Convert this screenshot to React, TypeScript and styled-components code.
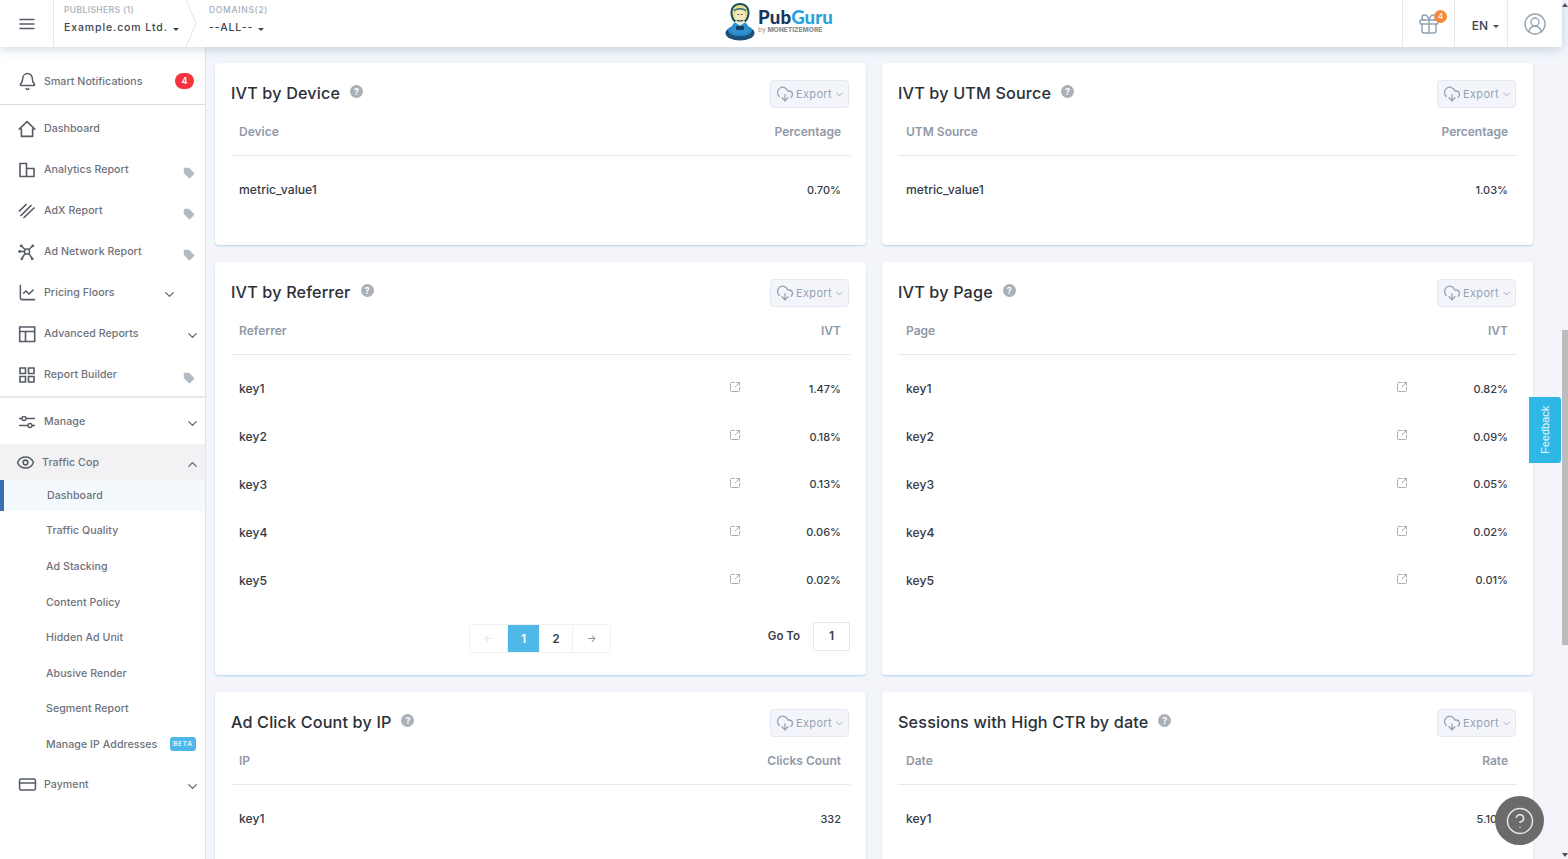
import React from "react";
import styled, { createGlobalStyle } from "styled-components";
import { Bell, ChevronDown, ChevronUp, Tag, Eye, CreditCard, LineChart, Gift, CircleUserRound, CloudDownload, SquareArrowOutUpRight, CircleHelp } from "lucide-react";

const FONT = `Inter, "Noto Sans", "Liberation Sans", sans-serif`;

const Global = createGlobalStyle`
  html, body { margin: 0; padding: 0; height: 100%; overflow: hidden; }
  body { font-family: ${FONT}; background: #f3f5fb; color: #2b3240; }
  #root { height: 100%; }
  * { box-sizing: border-box; }
`;

const Root = styled.div`
  position: relative;
  display: flex;
  width: 1568px;
  height: 859px;
  overflow: hidden;
  background: #f3f5fb;
`;
const Page = styled.div`
  flex: 1;
  min-width: 0;
  display: flex;
  flex-direction: column;
`;
const Track = styled.div`
  width: 6px;
  display: flex;
  flex-direction: column;
  align-items: stretch;
  padding-top: 330px;
  position: relative;
  background: #f3f5fb;
`;
const Thumb = styled.div`
  height: 315px;
  background: #bcbcbc;
`;
const TrackArrow = styled.span<{ $bottom?: boolean }>`
  position: absolute;
  left: 0;
  ${(p) => (p.$bottom ? "bottom: 2px;" : "top: 3px;")}
  border-left: 3px solid transparent;
  border-right: 3px solid transparent;
  ${(p) => (p.$bottom ? "border-top: 4px solid #505050;" : "border-bottom: 4px solid #505050;")}
`;

const Header = styled.header`
  height: 47px;
  flex: none;
  background: #fff;
  display: grid;
  grid-template-columns: 1fr auto 1fr;
  align-items: stretch;
  box-shadow: 0 2px 10px rgba(120, 150, 170, 0.38);
  position: relative;
  z-index: 3;
`;
const HeaderLeft = styled.div`
  display: flex;
  align-items: stretch;
`;
const Burger = styled.div`
  width: 54px;
  display: flex;
  align-items: center;
  justify-content: center;
  color: #555b66;
  border-right: 1px solid #e7e9ee;
`;
const Crumb = styled.div<{ $w: number; $pad: number }>`
  width: ${(p) => p.$w}px;
  padding: 4px 0 0 ${(p) => p.$pad}px;
  position: relative;
  display: flex;
  flex-direction: column;
`;
const Chevron = styled.svg`
  position: absolute;
  right: -11px;
  top: 0;
`;
const CrumbLabel = styled.div<{ $ls: number }>`
  font-size: 8.5px;
  letter-spacing: ${(p) => p.$ls}px;
  line-height: 12px;
  color: #a4adba;
  font-weight: 500;
  white-space: nowrap;
`;
const CrumbValue = styled.div`
  font-size: 10.5px;
  line-height: 14px;
  margin-top: 5px;
  letter-spacing: 0.9px;
  font-weight: 500;
  color: #3d4450;
  display: flex;
  align-items: center;
  gap: 5px;
  white-space: nowrap;
`;
const Caret = styled.span`
  display: inline-block;
  border-left: 3.5px solid transparent;
  border-right: 3.5px solid transparent;
  border-top: 3.5px solid #3d4450;
  margin-top: 2px;
`;
const LogoWrap = styled.div`
  display: flex;
  align-items: flex-start;
  padding-top: 2px;
  padding-right: 4px;
  gap: 3px;
`;
const LogoText = styled.div`
  display: flex;
  flex-direction: column;
  padding-top: 7px;
`;
const LogoName = styled.div`
  font-family: "Lato", ${FONT};
  font-size: 18.6px;
  line-height: 17px;
  font-weight: 900;
  color: #17375e;
  letter-spacing: 0.1px;
  span {
    color: #27a2de;
  }
`;
const LogoBy = styled.div`
  font-size: 6.5px;
  line-height: 9px;
  color: #8a8f96;
  white-space: nowrap;
  b {
    font-weight: 800;
    font-size: 6.6px;
  }
`;
const HeaderRight = styled.div`
  display: flex;
  justify-content: flex-end;
  align-items: stretch;
`;
const HeaderCell = styled.div<{ $w: number; $shift?: number }>`
  width: ${(p) => p.$w}px;
  border-left: 1px solid #e7e9ee;
  display: flex;
  align-items: center;
  justify-content: center;
  padding-left: ${(p) => p.$shift ?? 0}px;
  position: relative;
  color: #93a3b3;
`;
const GiftBadge = styled.span`
  position: absolute;
  top: 10px;
  left: 31px;
  width: 13px;
  height: 13px;
  border-radius: 50%;
  background: #f58a3c;
  color: #fff;
  font-size: 8px;
  line-height: 13px;
  text-align: center;
`;
const Lang = styled.span`
  font-size: 12px;
  font-weight: 500;
  color: #3d4450;
  display: flex;
  align-items: center;
  gap: 5px;
  padding-top: 3px;
`;

const Body = styled.div`
  flex: 1;
  min-height: 0;
  display: flex;
`;
const Side = styled.aside`
  width: 206px;
  flex: none;
  background: #fff;
  border-right: 1px solid #dfe2e8;
  display: flex;
  flex-direction: column;
  padding-top: 11px;
`;
const Notif = styled.div`
  height: 47px;
  flex: none;
  padding: 1px 11px 1px 18px;
  display: flex;
  align-items: center;
  border-bottom: 1px solid #d9dbe0;
  margin-bottom: 3px;
  color: #6a6e78;
`;
const NavRow = styled.div`
  height: 41px;
  flex: none;
  display: flex;
  align-items: center;
  padding: 0 6px 0 18px;
  color: #5e636d;
  position: relative;
`;
const NavIcon = styled.span`
  width: 26px;
  display: flex;
  align-items: center;
  color: #565b65;
  flex: none;
`;
const NavText = styled.span`
  font-size: 10.6px;
  font-weight: 500;
  color: #6d727c;
  white-space: nowrap;
  flex: 1;
  letter-spacing: 0.06px;
`;
const NotifBadge = styled.span`
  width: 19px;
  height: 16px;
  border-radius: 8px;
  background: #f5333f;
  color: #fff;
  font-size: 9px;
  font-weight: 600;
  line-height: 16px;
  text-align: center;
`;
const Rule = styled.div`
  height: 2px;
  background: #e7e8ec;
  margin: 1px 0 3px;
  flex: none;
`;
const CopRow = styled.div`
  height: 36px;
  margin-top: 2px;
  background: #f2f2f4;
  display: flex;
  align-items: center;
  padding: 0 6px 0 16px;
  flex: none;
`;
const SubList = styled.div`
  display: flex;
  flex-direction: column;
  flex: none;
  margin-bottom: 2px;
`;
const SubItem = styled.div<{ $active?: boolean; $h?: number }>`
  height: ${(p) => p.$h ?? 35.5}px;
  display: flex;
  align-items: center;
  padding-left: ${(p) => (p.$active ? 43 : 46)}px;
  padding-right: 9px;
  font-size: 10.6px;
  font-weight: 500;
  letter-spacing: 0.06px;
  color: #6d727c;
  white-space: nowrap;
  background: ${(p) => (p.$active ? "#f4f9fd" : "transparent")};
  border-left: ${(p) => (p.$active ? "4px solid #3a6fb0" : "none")};
`;
const Beta = styled.span`
  background: #4fb8e8;
  color: #dff3fc;
  font-size: 6.5px;
  font-weight: 700;
  letter-spacing: 0.8px;
  border-radius: 3px;
  padding: 0 3px;
  height: 14px;
  line-height: 14px;
  margin-left: auto;
`;

const Main = styled.main`
  flex: 1;
  min-width: 0;
  overflow: hidden;
  padding: 16px 29px 0 9px;
  display: grid;
  grid-template-columns: 651px 651px;
  column-gap: 16px;
  row-gap: 17px;
  align-content: start;
`;
const Card = styled.section<{ $h?: number }>`
  background: #fff;
  border-radius: 4px;
  box-shadow: 0 1px 2px rgba(120, 190, 220, 0.55);
  padding: 17px 16px 0;
  ${(p) => (p.$h ? `height: ${p.$h}px;` : "")}
`;
const CardHead = styled.div`
  display: flex;
  align-items: flex-start;
  justify-content: space-between;
  height: 28px;
`;
const CardTitle = styled.h3`
  margin: 0;
  font-size: 16.2px;
  font-weight: 500;
  line-height: 26px;
  letter-spacing: 0.15px;
  color: #2b3038;
  display: flex;
  gap: 10px;
`;
const Hint = styled.span`
  width: 13px;
  height: 13px;
  margin-top: 5px;
  border-radius: 50%;
  background: #aab0b8;
  color: #fff;
  font-size: 9px;
  font-weight: 700;
  line-height: 13px;
  text-align: center;
`;
const ExportBtn = styled.div`
  width: 79px;
  height: 28px;
  border-radius: 4px;
  background: #f3f5fb;
  border: 1px solid #e4e8f0;
  display: flex;
  align-items: center;
  padding-left: 5px;
  gap: 2px;
  color: #97a3b4;
  font-size: 11px;
  letter-spacing: 0.35px;
  margin-right: 1px;
`;
const HeadRow = styled.div`
  display: flex;
  justify-content: space-between;
  height: 48px;
  padding: 14px 9px 0 8px;
  border-bottom: 1px solid #e6e8ec;
  font-size: 12px;
  font-weight: 600;
  line-height: 20px;
  color: #8f99a8;
`;
const DataRows = styled.div`
  padding-top: 10px;
`;
const DataRow = styled.div`
  display: flex;
  align-items: center;
  height: 47.8px;
  padding: 0 9px 0 8px;
  font-weight: 500;
  color: #363c47;
`;
const RowKey = styled.span`
  flex: 1;
  font-size: 12.2px;
`;
const RowIcon = styled.span`
  color: #a9afb8;
  display: flex;
  margin-top: -3px;
`;
const RowValue = styled.span`
  width: 100px;
  font-size: 11px;
  text-align: right;
`;
const Footer = styled.div`
  display: flex;
  align-items: flex-start;
  margin-top: 18px;
  padding-left: 238px;
`;
const Pager = styled.div`
  display: flex;
  height: 29px;
  margin-top: 2px;
  border: 1px solid #eef0f3;
  border-radius: 3px;
`;
const PageCell = styled.div<{ $w: number; $active?: boolean; $faint?: boolean; $arrow?: boolean }>`
  width: ${(p) => p.$w}px;
  display: flex;
  align-items: center;
  justify-content: center;
  font-size: ${(p) => (p.$arrow ? 10 : 12)}px;
  font-weight: ${(p) => (p.$arrow ? 400 : 600)};
  background: ${(p) => (p.$active ? "#4fb8e8" : "transparent")};
  color: ${(p) => (p.$active ? "#fff" : p.$faint ? "#dfe1e5" : p.$arrow ? "#7d828b" : "#3a3f49")};
  & + & {
    border-left: ${(p) => (p.$active ? "none" : "1px solid #f0f1f4")};
  }
`;
const GoTo = styled.div`
  margin-left: auto;
  display: flex;
  align-items: center;
  gap: 13px;
  font-size: 11.5px;
  font-weight: 600;
  color: #3a3f49;
`;
const GoInput = styled.div`
  width: 37px;
  height: 29px;
  border: 1px solid #e6eaee;
  border-radius: 2px;
  display: flex;
  align-items: center;
  justify-content: center;
  font-size: 12px;
  font-weight: 600;
  padding-bottom: 2px;
`;

const Feedback = styled.div`
  position: absolute;
  right: 7px;
  top: 397px;
  width: 32px;
  height: 66px;
  background: #2fb8e6;
  border-radius: 3px 0 0 3px;
  color: #e8f8fd;
  font-family: "Liberation Sans", sans-serif;
  font-size: 11px;
  writing-mode: vertical-rl;
  transform: rotate(180deg);
  display: flex;
  align-items: center;
  justify-content: center;
  z-index: 4;
`;
const HelpFab = styled.div`
  position: absolute;
  left: 1495px;
  top: 796px;
  width: 49px;
  height: 49px;
  border-radius: 50%;
  background: #6b6b6b;
  color: #e6e6e6;
  display: flex;
  align-items: center;
  justify-content: center;
  z-index: 4;
`;

const ico = { size: 19, strokeWidth: 1.9 };

const BurgerIcon = () => (
  <svg width="16" height="12" viewBox="0 0 16 12" fill="none" stroke="currentColor" strokeWidth="1.5">
    <path d="M.5 1.5h15M.5 6h15M.5 10.5h15" />
  </svg>
);
const BarsIcon = () => (
  <svg width="18" height="18" viewBox="0 0 18 18" fill="none" stroke="currentColor" strokeWidth="1.6">
    <path d="M2 2.500h6.500v13H2zM8.500 7.500H16v8H8.500z" />
  </svg>
);
const SlashIcon = () => (
  <svg width="18" height="18" viewBox="0 0 18 18" fill="none" stroke="currentColor" strokeWidth="1.7" strokeLinecap="round">
    <path d="M1.500 9 8 2.500M3 13.500 13 3.500M6 15.500 16 6" />
  </svg>
);
const NetIcon = () => (
  <svg width="18" height="18" viewBox="0 0 18 18" fill="none" stroke="currentColor" strokeWidth="1.5">
    <circle cx="9" cy="8.500" r="2.600" />
    <path d="M7 6.500 3.500 3M11 6.500 14.500 3M6.400 8.500H2M7 10.500l-3 5M11 10.500l3 5" />
    <g fill="currentColor" stroke="none">
      <circle cx="3.200" cy="2.800" r="1.400" />
      <circle cx="14.800" cy="2.800" r="1.400" />
      <circle cx="1.600" cy="8.500" r="1.400" />
      <circle cx="3.800" cy="15.800" r="1.400" />
      <circle cx="14.200" cy="15.800" r="1.400" />
    </g>
  </svg>
);
const TableIcon = () => (
  <svg width="18" height="18" viewBox="0 0 18 18" fill="none" stroke="currentColor" strokeWidth="1.6">
    <path d="M1.700 2h15v14.500h-15zM1.700 6.500h15M7.500 6.500v10" />
  </svg>
);
const GridIcon = () => (
  <svg width="18" height="18" viewBox="0 0 18 18" fill="none" stroke="currentColor" strokeWidth="1.6">
    <path d="M2 2h5.500v5.500H2zM10.500 2H16v5.500h-5.500zM2 10.500h5.500V16H2zM10.500 10.500H16V16h-5.500z" />
  </svg>
);
const SliderIcon = () => (
  <svg width="18" height="18" viewBox="0 0 18 18" fill="none" stroke="currentColor" strokeWidth="1.4">
    <path d="M1 5.500h3M8 5.500h9M1 12.500h9M14 12.500h3" />
    <circle cx="6" cy="5.500" r="2" />
    <circle cx="12" cy="12.500" r="2" />
  </svg>
);
const HomeIcon = () => (
  <svg width="18" height="18" viewBox="0 0 18 18" fill="none" stroke="currentColor" strokeWidth="1.6">
    <path d="M1.200 9 9 1.600 16.800 9H14.600v7.400H3.400V9z" strokeLinejoin="round" />
  </svg>
);
const Logo = () => (
  <svg width="30" height="39" viewBox="0 0 30 39">
    <ellipse cx="15" cy="31" rx="14.500" ry="7.500" fill="#1b4f78" />
    <ellipse cx="15" cy="28.500" rx="12" ry="5.500" fill="#2a88c8" />
    <path d="M6 29c0-6 3-10 9-10s9 4 9 10c-3 3-15 3-18 0z" fill="#2f8fd0" />
    <path d="M15 1c6 0 9.500 4 9.500 9.500 0 5-2 8-3.500 9.500H9c-1.500-1.500-3.500-4.500-3.500-9.500C5.500 5 9 1 15 1z" fill="#1d4f63" />
    <path d="M15 3c4.500 0 7.500 3 7.500 7.500 0 3-1 6-2.500 7.500H10c-1.500-1.500-2.500-4.500-2.500-7.500C7.500 6 10.500 3 15 3z" fill="#e8df8e" />
    <path d="M9 9c2-3 10-3 12 0" fill="none" stroke="#2c6f85" strokeWidth="1.400" />
    <ellipse cx="15" cy="13.500" rx="5" ry="5" fill="#f6ecc0" />
    <path d="M12.300 12.500h2M15.700 12.500h2" stroke="#5a4a20" strokeWidth="0.900" />
    <path d="M11 17.500c1 3 7 3 8 0l1 3-5 3-5-3z" fill="#f2edd2" />
    <rect x="11" y="24" width="8" height="4" rx="1" fill="#143e5f" />
  </svg>
);

type Nav = { label: string; icon: React.ReactNode; tag?: boolean; chevron?: "far" | "near" };

const reports: Nav[] = [
  { label: "Dashboard", icon: <HomeIcon /> },
  { label: "Analytics Report", icon: <BarsIcon />, tag: true },
  { label: "AdX Report", icon: <SlashIcon />, tag: true },
  { label: "Ad Network Report", icon: <NetIcon />, tag: true },
  { label: "Pricing Floors", icon: <LineChart {...ico} />, chevron: "near" },
  { label: "Advanced Reports", icon: <TableIcon />, chevron: "far" },
  { label: "Report Builder", icon: <GridIcon />, tag: true },
];

const NavTag = styled.span`
  color: #b2bac4;
  display: flex;
  margin: 6px 4px 0 0;
`;
const NavChevron = styled.span<{ $near?: boolean }>`
  display: flex;
  color: #5e636d;
  margin: 4px ${(p) => (p.$near ? 22 : -1)}px 0 0;
`;

const NavItem = ({ item }: { item: Nav }) => (
  <NavRow>
    <NavIcon>{item.icon}</NavIcon>
    <NavText>{item.label}</NavText>
    {item.tag && (
      <NavTag>
        <Tag size={12} fill="currentColor" strokeWidth={1} />
      </NavTag>
    )}
    {item.chevron && (
      <NavChevron $near={item.chevron === "near"}>
        <ChevronDown size={15} strokeWidth={2} />
      </NavChevron>
    )}
  </NavRow>
);

const subs = ["Traffic Quality", "Ad Stacking", "Content Policy", "Hidden Ad Unit", "Abusive Render", "Segment Report"];

type TableProps = {
  title: string;
  col: string;
  valCol: string;
  rows: [string, string][];
  link?: boolean;
  pager?: boolean;
  h?: number;
};

const DataCard = ({ title, col, valCol, rows, link, pager, h }: TableProps) => (
  <Card $h={h}>
    <CardHead>
      <CardTitle>
        {title}
        <Hint>?</Hint>
      </CardTitle>
      <ExportBtn>
        <CloudDownload size={18} strokeWidth={1.7} />
        Export
        <ChevronDown size={11} strokeWidth={2} />
      </ExportBtn>
    </CardHead>
    <HeadRow>
      <span>{col}</span>
      <span>{valCol}</span>
    </HeadRow>
    <DataRows>
      {rows.map(([k, v]) => (
        <DataRow key={k}>
          <RowKey>{k}</RowKey>
          {link && (
            <RowIcon>
              <SquareArrowOutUpRight size={12} strokeWidth={2} />
            </RowIcon>
          )}
          <RowValue>{v}</RowValue>
        </DataRow>
      ))}
    </DataRows>
    {pager && (
      <Footer>
        <Pager>
          <PageCell $w={37} $faint $arrow>←</PageCell>
          <PageCell $w={32} $active>1</PageCell>
          <PageCell $w={33}>2</PageCell>
          <PageCell $w={38} $arrow>→</PageCell>
        </Pager>
        <GoTo>
          Go To
          <GoInput>1</GoInput>
        </GoTo>
      </Footer>
    )}
  </Card>
);

const keys = (vals: string[]): [string, string][] => vals.map((v, i) => [`key${i + 1}`, v]);

export default function App() {
  return (
    <Root>
      <Global />
      <Page>
        <Header>
          <HeaderLeft>
            <Burger>
              <BurgerIcon />
            </Burger>
            <Crumb $w={132} $pad={10}>
              <CrumbLabel $ls={0.4}>PUBLISHERS (1)</CrumbLabel>
              <CrumbValue>
                Example.com Ltd. <Caret />
              </CrumbValue>
              <Chevron width="12" height="47" viewBox="0 0 12 47" fill="none" stroke="#e3e5ea">
                <path d="M1 0l10 23.500L1 47" />
              </Chevron>
            </Crumb>
            <Crumb $w={120} $pad={23}>
              <CrumbLabel $ls={0.7}>DOMAINS(2)</CrumbLabel>
              <CrumbValue>
                --ALL-- <Caret />
              </CrumbValue>
            </Crumb>
          </HeaderLeft>
          <LogoWrap>
            <Logo />
            <LogoText>
              <LogoName>
                Pub<span>Guru</span>
              </LogoName>
              <LogoBy>
                by <b>MONETIZEMORE</b>
              </LogoBy>
            </LogoText>
          </LogoWrap>
          <HeaderRight>
            <HeaderCell $w={52}>
              <Gift size={24} strokeWidth={1.5} />
              <GiftBadge>4</GiftBadge>
            </HeaderCell>
            <HeaderCell $w={53} $shift={9}>
              <Lang>
                EN <Caret />
              </Lang>
            </HeaderCell>
            <HeaderCell $w={55}>
              <CircleUserRound size={24} strokeWidth={1.4} />
            </HeaderCell>
          </HeaderRight>
        </Header>
        <Body>
          <Side>
            <Notif>
              <NavIcon>
                <Bell {...ico} />
              </NavIcon>
              <NavText>Smart Notifications</NavText>
              <NotifBadge>4</NotifBadge>
            </Notif>
            {reports.map((r) => (
              <NavItem key={r.label} item={r} />
            ))}
            <Rule />
            <NavItem item={{ label: "Manage", icon: <SliderIcon />, chevron: "far" }} />
            <CopRow>
              <NavIcon>
                <Eye {...ico} />
              </NavIcon>
              <NavText>Traffic Cop</NavText>
              <NavChevron>
                <ChevronUp size={15} strokeWidth={2} />
              </NavChevron>
            </CopRow>
            <SubList>
              <SubItem $active $h={31}>Dashboard</SubItem>
              <SubItem $h={38}>Traffic Quality</SubItem>
              {subs.slice(1).map((s) => (
                <SubItem key={s}>{s}</SubItem>
              ))}
              <SubItem>
                Manage IP Addresses
                <Beta>BETA</Beta>
              </SubItem>
            </SubList>
            <NavItem item={{ label: "Payment", icon: <CreditCard {...ico} />, chevron: "far" }} />
          </Side>
          <Main>
            <DataCard h={182} title="IVT by Device" col="Device" valCol="Percentage" rows={[["metric_value1", "0.70%"]]} />
            <DataCard h={182} title="IVT by UTM Source" col="UTM Source" valCol="Percentage" rows={[["metric_value1", "1.03%"]]} />
            <DataCard h={413} title="IVT by Referrer" col="Referrer" valCol="IVT" link pager rows={keys(["1.47%", "0.18%", "0.13%", "0.06%", "0.02%"])} />
            <DataCard h={413} title="IVT by Page" col="Page" valCol="IVT" link rows={keys(["0.82%", "0.09%", "0.05%", "0.02%", "0.01%"])} />
            <DataCard title="Ad Click Count by IP" col="IP" valCol="Clicks Count" rows={[["key1", "332"], ["key2", "327"]]} />
            <DataCard title="Sessions with High CTR by date" col="Date" valCol="Rate" rows={[["key1", "5.10%"], ["key2", "3.21%"]]} />
          </Main>
        </Body>
      </Page>
      <Track>
        <TrackArrow />
        <Thumb />
        <TrackArrow $bottom />
      </Track>
      <Feedback>Feedback</Feedback>
      <HelpFab>
        <CircleHelp size={30} strokeWidth={1.2} />
      </HelpFab>
    </Root>
  );
}
